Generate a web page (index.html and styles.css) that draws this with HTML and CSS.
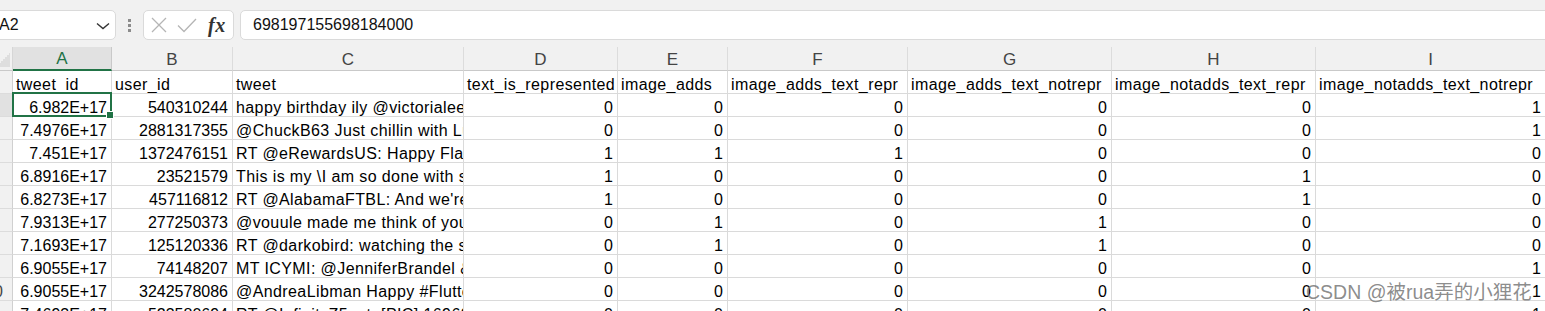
FILE: index.html
```html
<!DOCTYPE html>
<html>
<head>
<meta charset="utf-8">
<link rel="stylesheet" href="styles.css">
</head>
<body>
<div class="app">
  <div class="fbar">
    <div class="namebox">
      <span class="ref">A2</span>
      <svg class="chev" width="14" height="8" viewBox="0 0 14 8"><path d="M1 1.5 L7 6.5 L13 1.5" fill="none" stroke="#333" stroke-width="1.4"/></svg>
    </div>
    <div class="dots"><i></i><i></i><i></i></div>
    <div class="fxbox">
      <svg width="16" height="16" viewBox="0 0 16 16"><path d="M1 1 L15 15 M15 1 L1 15" stroke="#b5b5b5" stroke-width="1.3" fill="none"/></svg>
      <svg width="20" height="15" viewBox="0 0 20 15"><path d="M1 7.5 L7 13.5 L19 1" stroke="#b5b5b5" stroke-width="1.3" fill="none"/></svg>
      <span class="fx">fx</span>
    </div>
    <div class="input">698197155698184000</div>
  </div>

  <div class="sheet">
    <div class="corner"></div>
    <div class="ch sel">A</div>
    <div class="ch">B</div>
    <div class="ch">C</div>
    <div class="ch">D</div>
    <div class="ch">E</div>
    <div class="ch">F</div>
    <div class="ch">G</div>
    <div class="ch">H</div>
    <div class="ch">I</div>

    <div class="rh"><span>1</span></div>
    <div class="c">tweet_id</div>
    <div class="c">user_id</div>
    <div class="c">tweet</div>
    <div class="c">text_is_represented</div>
    <div class="c">image_adds</div>
    <div class="c">image_adds_text_repr</div>
    <div class="c">image_adds_text_notrepr</div>
    <div class="c">image_notadds_text_repr</div>
    <div class="c">image_notadds_text_notrepr</div>

    <div class="rh rsel"><span>2</span></div>
    <div class="c n active">6.982E+17</div>
    <div class="c n">540310244</div>
    <div class="c">happy birthday ily @victorialeeeee</div>
    <div class="c n">0</div><div class="c n">0</div><div class="c n">0</div><div class="c n">0</div><div class="c n">0</div><div class="c n">1</div>

    <div class="rh"><span>3</span></div>
    <div class="c n">7.4976E+17</div>
    <div class="c n">2881317355</div>
    <div class="c">@ChuckB63 Just chillin with Lucy</div>
    <div class="c n">0</div><div class="c n">0</div><div class="c n">0</div><div class="c n">0</div><div class="c n">0</div><div class="c n">1</div>

    <div class="rh"><span>4</span></div>
    <div class="c n">7.451E+17</div>
    <div class="c n">1372476151</div>
    <div class="c">RT @eRewardsUS: Happy Flag Day</div>
    <div class="c n">1</div><div class="c n">1</div><div class="c n">1</div><div class="c n">0</div><div class="c n">0</div><div class="c n">0</div>

    <div class="rh"><span>5</span></div>
    <div class="c n">6.8916E+17</div>
    <div class="c n">23521579</div>
    <div class="c">This is my \I am so done with school</div>
    <div class="c n">1</div><div class="c n">0</div><div class="c n">0</div><div class="c n">0</div><div class="c n">1</div><div class="c n">0</div>

    <div class="rh"><span>6</span></div>
    <div class="c n">6.8273E+17</div>
    <div class="c n">457116812</div>
    <div class="c">RT @AlabamaFTBL: And we're back</div>
    <div class="c n">1</div><div class="c n">0</div><div class="c n">0</div><div class="c n">0</div><div class="c n">1</div><div class="c n">0</div>

    <div class="rh"><span>7</span></div>
    <div class="c n">7.9313E+17</div>
    <div class="c n">277250373</div>
    <div class="c">@vouule made me think of you</div>
    <div class="c n">0</div><div class="c n">1</div><div class="c n">0</div><div class="c n">1</div><div class="c n">0</div><div class="c n">0</div>

    <div class="rh"><span>8</span></div>
    <div class="c n">7.1693E+17</div>
    <div class="c n">125120336</div>
    <div class="c">RT @darkobird: watching the sunset</div>
    <div class="c n">0</div><div class="c n">1</div><div class="c n">0</div><div class="c n">1</div><div class="c n">0</div><div class="c n">0</div>

    <div class="rh"><span>9</span></div>
    <div class="c n">6.9055E+17</div>
    <div class="c n">74148207</div>
    <div class="c">MT ICYMI: @JenniferBrandel &amp; co</div>
    <div class="c n">0</div><div class="c n">0</div><div class="c n">0</div><div class="c n">0</div><div class="c n">0</div><div class="c n">1</div>

    <div class="rh"><span>10</span></div>
    <div class="c n">6.9055E+17</div>
    <div class="c n">3242578086</div>
    <div class="c">@AndreaLibman Happy #Fluttershy</div>
    <div class="c n">0</div><div class="c n">0</div><div class="c n">0</div><div class="c n">0</div><div class="c n">0</div><div class="c n">1</div>

    <div class="rh"><span>11</span></div>
    <div class="c n">7.4693E+17</div>
    <div class="c n">523580694</div>
    <div class="c">RT @InfinityZ5ent: [PIC] 169623</div>
    <div class="c n">0</div><div class="c n">0</div><div class="c n">0</div><div class="c n">0</div><div class="c n">0</div><div class="c n">1</div>
  </div>

  <div class="watermark">CSDN @被rua弄的小狸花</div>
</div>
</body>
</html>
```

FILE: styles.css
```css
* { box-sizing: border-box; }
html, body {
  margin: 0;
  padding: 0;
  width: 1545px;
  height: 311px;
  overflow: hidden;
  background: #ffffff;
}
.app {
  position: relative;
  width: 1545px;
  height: 311px;
  overflow: hidden;
  font-family: "Liberation Sans", Arial, "Noto Sans CJK SC", sans-serif;
  color: #000;
}

/* formula bar */
.fbar {
  height: 47px;
  background: #f1f1f1;
  display: flex;
  align-items: flex-start;
  padding-top: 10px;
}
.namebox {
  margin-left: -10px;
  width: 126px;
  height: 30px;
  background: #fff;
  border: 1px solid #dadada;
  border-radius: 5px;
  display: flex;
  align-items: center;
  justify-content: space-between;
  padding: 0 5px 0 8px;
  font-size: 16px;
}
.ref { color: #111; }
.chev { margin-top: 1px; }
.dots {
  width: 27px;
  height: 30px;
  display: flex;
  flex-direction: column;
  align-items: center;
  justify-content: center;
  gap: 2px;
}
.dots i {
  display: block;
  width: 3px;
  height: 3px;
  background: #8c8c8c;
}
.fxbox {
  width: 91px;
  height: 30px;
  background: #fff;
  border: 1px solid #dadada;
  border-radius: 5px;
  display: flex;
  align-items: center;
  padding: 0 4px 0 7px;
  gap: 10px;
}
.fx {
  font-family: "Liberation Serif", "DejaVu Serif", serif;
  font-style: italic;
  font-weight: bold;
  font-size: 20px;
  color: #333;
  margin-left: 1px;
  letter-spacing: 0.5px;
}
.input {
  margin-left: 6px;
  flex: 1;
  margin-right: -20px;
  height: 30px;
  background: #fff;
  border: 1px solid #dadada;
  border-radius: 5px;
  display: flex;
  align-items: center;
  padding-left: 12px;
  font-size: 16px;
  color: #111;
}

/* sheet grid */
.sheet {
  display: grid;
  grid-template-columns: 13px 99px 121px 231px 154px 110px 180px 204px 204px 230px;
  grid-template-rows: 24px;
  grid-auto-rows: 23px;
  font-size: 16px;
}
.corner {
  background: #f1f1f1;
  border-right: 1px solid #d6d6d6;
  border-bottom: 1px solid #c9c9c9;
  position: relative;
  overflow: hidden;
}
.corner::after {
  content: "";
  position: absolute;
  right: 2px;
  bottom: 3px;
  width: 14px;
  height: 14px;
  background: linear-gradient(135deg, transparent 50%, #dedede 50%);
}
.ch {
  background: #f1f1f1;
  border-right: 1px solid #dcdcdc;
  border-bottom: 1px solid #c9c9c9;
  display: flex;
  align-items: center;
  justify-content: center;
  color: #444;
  font-size: 17px;
  padding-top: 2px;
}
.ch.sel {
  background: #e1e1e1;
  color: #217346;
  border-bottom: 2px solid #217346;
  border-right-color: #c9c9c9;
}
.rh {
  background: #f1f1f1;
  border-right: 1px solid #d0d0d0;
  border-bottom: 1px solid #dcdcdc;
  overflow: hidden;
  display: flex;
  justify-content: flex-end;
  align-items: flex-end;
  line-height: 16px;
  color: #444;
}
.rh span {
  flex: 0 0 auto;
  width: 36px;
  text-align: center;
}
.rh.rsel { background: #e1e1e1; }
.c {
  border-right: 1px solid #dadada;
  border-bottom: 1px solid #dadada;
  display: flex;
  align-items: flex-end;
  line-height: 16px;
  padding: 0 3px 0 3px;
  white-space: nowrap;
  overflow: hidden;
  color: #000;
  letter-spacing: 0.4px;
}
.c.n {
  justify-content: flex-end;
  padding-right: 4px;
  letter-spacing: 0;
}
.c.active {
  overflow: visible;
  position: relative;
}
.c.active::before {
  content: "";
  position: absolute;
  left: -1px;
  top: -2px;
  right: -1px;
  bottom: -1px;
  border: 2px solid #217346;
  pointer-events: none;
}
.c.active::after {
  content: "";
  position: absolute;
  right: -3px;
  bottom: -3px;
  width: 6px;
  height: 6px;
  background: #217346;
  border: 1px solid #fff;
}

.watermark {
  position: absolute;
  left: 1306px;
  top: 281px;
  font-size: 19.5px;
  line-height: 22px;
  color: rgba(120, 120, 120, 0.85);
  font-family: "Liberation Sans", "Noto Sans CJK SC", sans-serif;
  white-space: nowrap;
}
```
